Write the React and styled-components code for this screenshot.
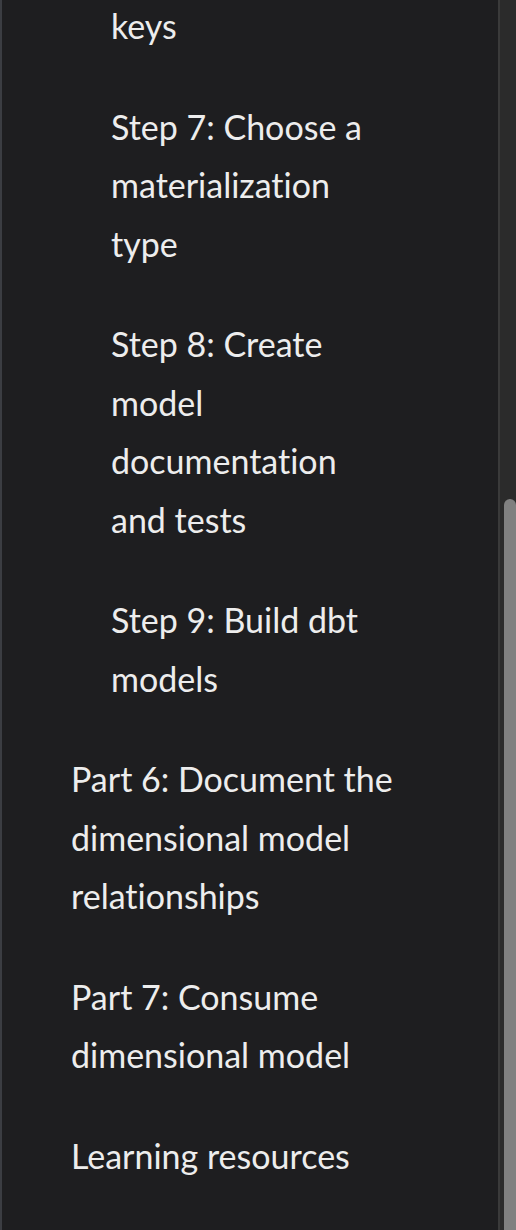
import React from "react";
import styled, { createGlobalStyle } from "styled-components";

const Global = createGlobalStyle`
  *, *::before, *::after { box-sizing: border-box; }
  html, body { margin: 0; padding: 0; background: #1e1e20; }
  body { font-family: Lato, "Open Sans", sans-serif; }
`;

const Frame = styled.div`
  display: flex;
  width: 516px;
  height: 1230px;
  overflow: hidden;
  background: #1e1e20;
`;

const Sidebar = styled.nav`
  flex: 1;
  min-width: 0;
  border-left: 2px solid #3b3d42;
  padding-left: 69px;
  overflow: hidden;
`;

const Menu = styled.ul`
  list-style: none;
  margin: ${(p) => (p.$top ? "-3px 0 0" : "0")};
  padding: 0 0 0 ${(p) => (p.$nested ? "40px" : "0")};
  width: ${(p) => (p.$nested ? "auto" : "327px")};
  display: flex;
  flex-direction: column;
  gap: 42px;
`;

const Item = styled.li`
  color: #ededed;
  font-family: Lato, "Open Sans", sans-serif;
  font-size: 34px;
  line-height: 58.5px;
  font-weight: 400;
  font-variant-ligatures: none;
`;

const Track = styled.div`
  width: 18px;
  flex: none;
  border-left: 2px solid #3a3a3a;
  background: #2b2b2b;
  display: flex;
  flex-direction: column;
  padding-top: 499px;
  padding-left: 4px;
`;

const Thumb = styled.div`
  flex: 1;
  background: #808080;
  border-radius: 6px 6px 0 0;
`;

const steps = [
  "keys",
  "Step 7: Choose a materialization type",
  "Step 8: Create model documentation and tests",
  "Step 9: Build dbt models",
];

const parts = [
  "Part 6: Document the dimensional model relationships",
  "Part 7: Consume dimensional model",
  "Learning resources",
];

export default function App() {
  return (
    <>
      <Global />
      <Frame>
        <Sidebar>
          <Menu $top>
            <li>
              <Menu $nested>
                {steps.map((s) => (
                  <Item key={s}>{s}</Item>
                ))}
              </Menu>
            </li>
            {parts.map((p) => (
              <Item key={p}>{p}</Item>
            ))}
          </Menu>
        </Sidebar>
        <Track>
          <Thumb />
        </Track>
      </Frame>
    </>
  );
}
